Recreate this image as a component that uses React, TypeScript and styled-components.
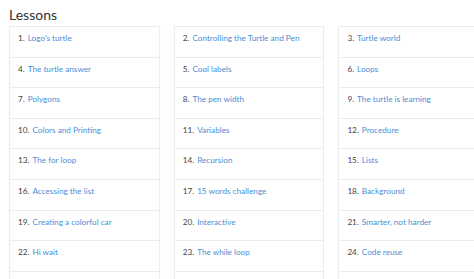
import styled, { createGlobalStyle } from 'styled-components';

const GlobalStyle = createGlobalStyle`
  html, body {
    margin: 0;
    padding: 0;
    background: #fff;
    overflow: hidden;
  }
  body {
    font-family: Lato, 'Open Sans', sans-serif;
    color: #333;
  }
`;

const Page = styled.div`
  padding: 5px 0 0 9px;
  width: 480px;
`;

const Title = styled.h1`
  margin: 0 0 1px;
  font-size: 14px;
  font-weight: 400;
  line-height: 20px;
  color: #333;
`;

const Grid = styled.div`
  display: grid;
  grid-template-columns: repeat(3, 150.5px);
  column-gap: 14.2px;
  grid-auto-rows: 30.6px;
`;

const Card = styled.div`
  border: 1px solid #ececec;
  margin-bottom: -1px;
  background: #fff;
  padding: 5px 8px;
  font-size: 8.2px;
  line-height: 12px;
  white-space: nowrap;
  box-shadow: 0 1px 1px rgba(0, 0, 0, 0.03);
`;

const Num = styled.span`
  color: #444;
  margin-right: 3px;
`;

const Link = styled.a`
  color: #4a8fd6;
  text-decoration: none;
`;

const lessons = [
  "Logo's turtle",
  'Controlling the Turtle and Pen',
  'Turtle world',
  'The turtle answer',
  'Cool labels',
  'Loops',
  'Polygons',
  'The pen width',
  'The turtle is learning',
  'Colors and Printing',
  'Variables',
  'Procedure',
  'The for loop',
  'Recursion',
  'Lists',
  'Accessing the list',
  '15 words challenge',
  'Background',
  'Creating a colorful car',
  'Interactive',
  'Smarter, not harder',
  'Hi wait',
  'The while loop',
  'Code reuse',
];

const App = () => (
  <>
    <GlobalStyle />
    <Page>
      <Title>Lessons</Title>
      <Grid>
        {lessons.map((name, i) => (
          <Card key={name}>
            <Num>{i + 1}.</Num>
            <Link href='#'>{name}</Link>
          </Card>
        ))}
        {/* next row only peeks in at the bottom edge */}
        <Card />
        <Card />
        <Card />
      </Grid>
    </Page>
  </>
);

export default App;
